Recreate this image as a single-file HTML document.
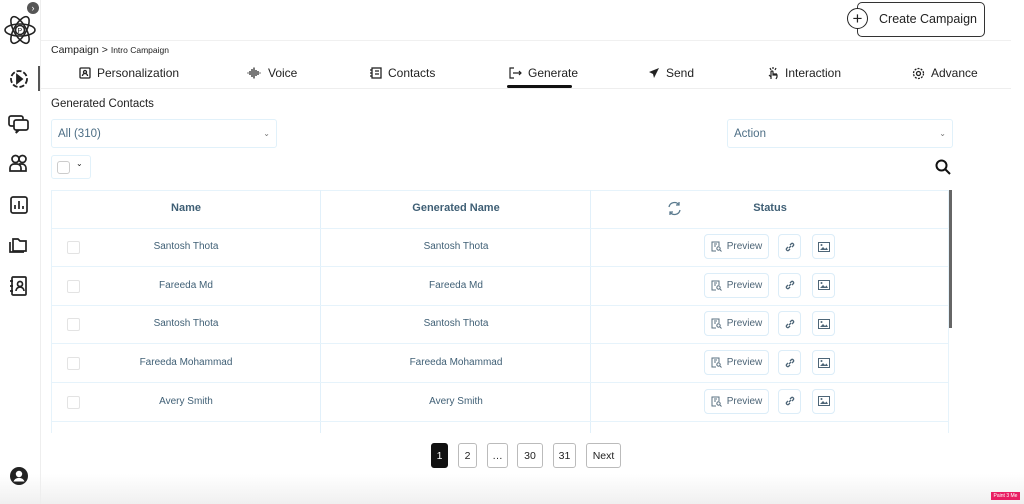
<!DOCTYPE html><html><head><style>
*{box-sizing:border-box;margin:0;padding:0}
body{width:1024px;height:504px;overflow:hidden;background:#fff;font-family:"Liberation Sans",sans-serif;position:relative;color:#222}
.abs{position:absolute}
.side{left:0;top:0;width:41px;height:504px;border-right:1px solid #eee}
.tab{position:absolute;top:66px;font-size:12px;color:#222;display:flex;align-items:center;gap:6px}
.sel{border:1px solid #e1f1fa;border-radius:3px;font-size:11.5px;color:#4d6e85;padding:0 6px;display:flex;align-items:center;justify-content:space-between}
.row{position:absolute;left:51px;width:898px;height:39px;border-bottom:1px solid #e6f3fb;font-size:10px;color:#3f5f75}
.row span{position:absolute;top:13px;width:270px;text-align:center}
.cb{position:absolute;left:16px;top:13px;width:13px;height:13px;border:1px solid #e3e3e3;border-radius:2px}
.btn{position:absolute;top:6px;height:25px;border:1px solid #dcedf8;border-radius:4px;display:flex;align-items:center;justify-content:center;font-size:10px;color:#4d6577}
.pg{position:absolute;top:443px;height:25px;border:1px solid #bbb;border-radius:3px;font-size:10.5px;display:flex;align-items:center;justify-content:center;color:#222}
</style></head><body>
<div class="abs" style="left:0;top:474px;width:1024px;height:30px;background:linear-gradient(#fff,#f0f0f0)"></div>
<div class="abs side"></div>
<div class="abs" style="left:27px;top:2px;width:12px;height:12px;border-radius:50%;background:#555;color:#fff;font-size:9px;line-height:12px;text-align:center">›</div>
<svg class="abs" style="left:3px;top:13px" width="34" height="34" viewBox="0 0 34 34" fill="none" stroke="#222" stroke-width="1.6"><ellipse cx="17" cy="17" rx="15" ry="6"/><ellipse cx="17" cy="17" rx="15" ry="6" transform="rotate(60 17 17)"/><ellipse cx="17" cy="17" rx="15" ry="6" transform="rotate(-60 17 17)"/><circle cx="17" cy="17" r="4.5" fill="#fff"/><text x="14.5" y="20" font-size="7" stroke="none" fill="#222" font-family="Liberation Sans">P</text></svg>
<svg class="abs" style="left:9px;top:69px" width="20" height="20" viewBox="0 0 20 20" fill="none" stroke="#222" stroke-width="1.8"><circle cx="10" cy="10" r="8" stroke-dasharray="5 2"/><path d="M8 6l5 4-5 4z" fill="#222"/></svg>
<div class="abs" style="left:38px;top:66px;width:2px;height:25px;background:#555"></div>
<svg class="abs" style="left:8px;top:114px" width="22" height="20" viewBox="0 0 22 20" fill="none" stroke="#222" stroke-width="1.7"><rect x="1" y="2" width="14" height="10" rx="2"/><rect x="6" y="6" width="14" height="10" rx="2" fill="#fff"/><path d="M9 16l-1 3 3-3"/></svg>
<svg class="abs" style="left:9px;top:153px" width="20" height="20" viewBox="0 0 20 20" fill="none" stroke="#222" stroke-width="1.7"><circle cx="6.5" cy="6" r="3.5"/><circle cx="13.5" cy="6" r="3.5"/><path d="M1 18v-3a4 4 0 0 1 4-4h3a4 4 0 0 1 4 4v3zM10 11h3a4 4 0 0 1 4 4v3h-5"/></svg>
<svg class="abs" style="left:10px;top:196px" width="18" height="18" viewBox="0 0 18 18" fill="none" stroke="#222" stroke-width="1.7"><rect x="1" y="1" width="16" height="16" rx="2"/><path d="M5 13V9M9 13V5M13 13v-3"/></svg>
<svg class="abs" style="left:9px;top:235px" width="20" height="18" viewBox="0 0 20 18" fill="none" stroke="#222" stroke-width="1.7"><path d="M4 4h5l2 2h6v10H4z"/><path d="M1 7v10h14"/></svg>
<svg class="abs" style="left:10px;top:276px" width="18" height="20" viewBox="0 0 18 20" fill="none" stroke="#222" stroke-width="1.7"><rect x="2" y="1" width="14" height="18" rx="1"/><circle cx="10" cy="8" r="2.5"/><path d="M6 15a4 4 0 0 1 8 0M0 5h3M0 10h3M0 15h3"/></svg>
<svg class="abs" style="left:9px;top:466px" width="20" height="20" viewBox="0 0 20 20"><circle cx="10" cy="10" r="9" fill="#222"/><circle cx="10" cy="8" r="3.2" fill="#fff"/><path d="M4.5 15.5a6 6 0 0 1 11 0" fill="#fff"/></svg>

<div class="abs" style="left:857px;top:2px;width:128px;height:35px;border:1px solid #333;border-radius:5px;font-size:12.5px;padding:9px 0 0 21px">Create Campaign</div>
<div class="abs" style="left:847px;top:8px;width:21px;height:21px;border:1px solid #222;border-radius:50%;background:#fff;text-align:center;font-size:17px;line-height:19px">+</div>
<div class="abs" style="left:41px;top:40px;width:970px;height:1px;background:#f0f0f0"></div>
<div class="abs" style="left:51px;top:44px;font-size:10.5px">Campaign &gt; <span style="font-size:8.5px">Intro Campaign</span></div>

<div class="tab" style="left:79px"><svg width="12" height="12" viewBox="0 0 12 12" fill="none" stroke="#222" stroke-width="1.3"><rect x="1" y="1" width="10" height="10" rx="1"/><circle cx="6" cy="5" r="1.5"/><path d="M3.5 9a2.5 2.5 0 0 1 5 0"/></svg>Personalization</div>
<div class="tab" style="left:247px"><svg width="15" height="12" viewBox="0 0 15 12" fill="none" stroke="#222" stroke-width="1.2"><path d="M1 5.5v1M3 4v4M5 2v8M7 0.5v11M9 3v6M11 4v4M13 5.5v1"/></svg>Voice</div>
<div class="tab" style="left:370px"><svg width="12" height="12" viewBox="0 0 12 12" fill="none" stroke="#222" stroke-width="1.3"><rect x="2" y="1" width="9" height="10"/><path d="M0 3h2M0 6h2M0 9h2M5 4h4M5 7h4"/></svg>Contacts</div>
<div class="tab" style="left:509px"><svg width="13" height="12" viewBox="0 0 13 12" fill="none" stroke="#222" stroke-width="1.2"><path d="M5 1H1v10h4M4 6h8M10 4l2 2-2 2"/></svg>Generate</div>
<div class="abs" style="left:507px;top:85px;width:65px;height:3px;border-radius:2px;background:#111"></div>
<div class="tab" style="left:648px"><svg width="12" height="12" viewBox="0 0 12 12"><path d="M11 1L1 5l4 2 1 4z" fill="#222"/></svg>Send</div>
<div class="tab" style="left:767px"><svg width="12" height="13" viewBox="0 0 12 13" fill="none" stroke="#222" stroke-width="1.2"><path d="M4 12V5a1 1 0 0 1 2 0v3h4v2l-1 2M6 7h4M2 8l2 2M3 1l1 2M6 0v2M9 1L8 3"/></svg>Interaction</div>
<div class="tab" style="left:912px"><svg width="13" height="13" viewBox="0 0 13 13" fill="none" stroke="#222" stroke-width="1.3"><circle cx="6.5" cy="6.5" r="2"/><circle cx="6.5" cy="6.5" r="5" stroke-dasharray="2 1.2"/></svg>Advance</div>
<div class="abs" style="left:41px;top:88px;width:970px;height:1px;background:#eee"></div>

<div class="abs" style="left:51px;top:98px;font-size:11.5px">Generated Contacts</div>
<div class="abs sel" style="left:51px;top:119px;width:226px;height:29px">All (310)<span style="font-size:8px;color:#777">⌄</span></div>
<div class="abs sel" style="left:727px;top:119px;width:226px;height:29px">Action<span style="font-size:8px;color:#777">⌄</span></div>
<div class="abs" style="left:51px;top:155px;width:40px;height:24px;border:1px solid #e1f1fa;border-radius:3px"><div style="position:absolute;left:5px;top:5px;width:13px;height:13px;border:1px solid #ccc;border-radius:3px"></div><span style="position:absolute;left:24px;top:3px;font-size:8px">⌄</span></div>
<svg class="abs" style="left:935px;top:159px" width="16" height="16" viewBox="0 0 16 16" fill="none" stroke="#111" stroke-width="2"><circle cx="6.5" cy="6.5" r="5"/><path d="M10 10l5 5"/></svg>

<div class="abs" style="left:51px;top:190px;width:898px;height:243px;border:1px solid #e6f3fb;border-bottom:none"></div>
<div class="abs" style="left:320px;top:190px;width:1px;height:243px;background:#e1f0fa"></div>
<div class="abs" style="left:590px;top:190px;width:1px;height:243px;background:#e1f0fa"></div>
<div class="row" style="top:190px;font-size:11px;font-weight:bold;color:#3f5f75"><span style="left:0;top:12px">Name</span><span style="left:270px;top:12px">Generated Name</span><span style="left:669px;top:12px;width:100px">Status</span>
<svg style="position:absolute;left:616px;top:11px" width="15" height="15" viewBox="0 0 15 15" fill="none" stroke="#5a7a8e" stroke-width="1.3"><path d="M2 6a5.5 5.5 0 0 1 10-2M13 9a5.5 5.5 0 0 1-10 2M12 1v3h-3M3 14v-3h3"/></svg></div>

<div id="rows"></div>
<div class="abs" style="left:949px;top:190px;width:3px;height:138px;background:#666"></div>

<div class="pg" style="left:431px;width:17px;background:#111;color:#fff;border-color:#111">1</div>
<div class="pg" style="left:458px;width:19px">2</div>
<div class="pg" style="left:487px;width:21px">…</div>
<div class="pg" style="left:517px;width:26px">30</div>
<div class="pg" style="left:553px;width:23px">31</div>
<div class="pg" style="left:586px;width:35px">Next</div>
<div class="abs" style="left:991px;top:492px;width:29px;height:8px;background:#e91e63;color:#fff;font-size:5px;text-align:center;line-height:8px">Paint 3 Me</div>
<script>
var names=["Santosh Thota","Fareeda Md","Santosh Thota","Fareeda Mohammad","Avery Smith",""];
var h="";
names.forEach(function(n,i){var t=228+i*38.7;
var clip=i==5?"height:5px;overflow:hidden;border-bottom:none;":"";
h+='<div class="row" style="top:'+t+'px;'+clip+'">'+(n?'<div class="cb"></div>':'')+'<span style="left:0">'+n+'</span><span style="left:270px">'+n+'</span>'+
'<div class="btn" style="left:653px;width:65px;gap:5px"><svg width="11" height="11" viewBox="0 0 11 11" fill="none" stroke="#5a7080" stroke-width="1"><path d="M8 5V1H1v9h4M3 3h3M3 5h2"/><circle cx="7.5" cy="7.5" r="1.7"/><path d="M9 9l1.5 1.5"/></svg>Preview</div>'+
'<div class="btn" style="left:727px;width:23px"><svg width="10" height="10" viewBox="0 0 10 10" fill="none" stroke="#4d6577" stroke-width="1.3"><path d="M4 6l2-2M3 5L1.5 6.5a1.5 1.5 0 0 0 2 2L5 7M7 5l1.5-1.5a1.5 1.5 0 0 0-2-2L5 3"/></svg></div>'+
'<div class="btn" style="left:761px;width:23px"><svg width="12" height="10" viewBox="0 0 12 10"><rect x="0.5" y="0.5" width="11" height="9" fill="none" stroke="#4d6577"/><path d="M2 8l3-3 2 2 1.5-1.5L10 8z" fill="#4d6577"/><circle cx="3.5" cy="3" r="1" fill="#4d6577"/></svg></div></div>';});
document.getElementById("rows").innerHTML=h;
</script>
</body></html>
